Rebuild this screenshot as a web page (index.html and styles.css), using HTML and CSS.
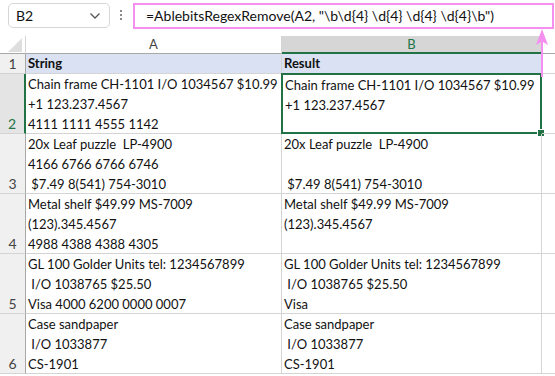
FILE: index.html
```html
<!DOCTYPE html>
<html lang="en">
<head>
    <meta charset="UTF-8">
    <title>AblebitsRegexRemove</title>
    <link rel="stylesheet" href="styles.css">
</head>
<body>
    <div class="bar">
        <div class="namebox">
            <span>B2</span>
            <svg class="chev" width="12" height="8" viewBox="0 0 12 8"><path d="M1.5 1.5 L6 6 L10.5 1.5" fill="none" stroke="#555" stroke-width="1.3"/></svg>
        </div>
        <div class="dots"><i></i><i></i><i></i></div>
        <div class="formula">=AblebitsRegexRemove(A2, "\b\d{4} \d{4} \d{4} \d{4}\b")</div>
    </div>

    <div class="sheet">
        <div class="corner"><span class="tri"></span></div>
        <div class="colhead">A</div>
        <div class="colhead sel">B</div>
        <div class="colhead rest"></div>

        <div class="rowhead">1</div>
        <div class="cell head">String</div>
        <div class="cell head">Result</div>
        <div class="cell rest"></div>

        <div class="rowhead sel">2</div>
        <div class="cell">Chain frame CH-1101 I/O 1034567 $10.99<br>+1 123.237.4567<br>4111 1111 4555 1142</div>
        <div class="cell active">Chain frame CH-1101 I/O 1034567 $10.99<br>+1 123.237.4567<span class="handle"></span></div>
        <div class="cell rest"></div>

        <div class="rowhead">3</div>
        <div class="cell">20x Leaf puzzle&nbsp; LP-4900<br>4166 6766 6766 6746<br>&nbsp;$7.49 8(541) 754-3010</div>
        <div class="cell">20x Leaf puzzle&nbsp; LP-4900<br><br>&nbsp;$7.49 8(541) 754-3010</div>
        <div class="cell rest"></div>

        <div class="rowhead">4</div>
        <div class="cell">Metal shelf $49.99 MS-7009<br>(123).345.4567<br>4988 4388 4388 4305</div>
        <div class="cell">Metal shelf $49.99 MS-7009<br>(123).345.4567</div>
        <div class="cell rest"></div>

        <div class="rowhead">5</div>
        <div class="cell">GL 100 Golder Units tel: 1234567899<br>&nbsp;I/O 1038765 $25.50<br>Visa 4000 6200 0000 0007</div>
        <div class="cell">GL 100 Golder Units tel: 1234567899<br>&nbsp;I/O 1038765 $25.50<br>Visa</div>
        <div class="cell rest"></div>

        <div class="rowhead">6</div>
        <div class="cell">Case sandpaper<br>&nbsp;I/O 1033877<br>CS-1901</div>
        <div class="cell">Case sandpaper<br>&nbsp;I/O 1033877<br>CS-1901</div>
        <div class="cell rest"></div>
    </div>

    <!-- callout arrow from the formula bar down to the active cell -->
    <svg class="arrow" width="14" height="48" viewBox="0 0 14 48">
        <path d="M7 0 L13 16 L8 13 L8 48 L6 48 L6 13 L1 16 Z" fill="#f58ff0"/>
    </svg>
</body>
</html>
```

FILE: styles.css
```css
body {
    margin: 0;
    width: 555px;
    height: 376px;
    overflow: hidden;
    background: #fff;
    font-family: "Lato", "Liberation Sans", sans-serif;
    color: #111;
    position: relative;
}
.bar {
    height: 36px;
    display: flex;
    align-items: flex-start;
    padding-top: 3px;
    box-sizing: border-box;
}
.namebox {
    margin-left: 8px;
    width: 102px;
    height: 25px;
    border: 1px solid #d6d6d6;
    border-radius: 5px;
    box-sizing: border-box;
    display: flex;
    align-items: center;
    justify-content: space-between;
    padding: 0 8px 0 7px;
    font-size: 14px;
}
.dots {
    width: 22px;
    display: flex;
    flex-direction: column;
    align-items: center;
    gap: 2px;
    padding-top: 7px;
}
.dots i {
    width: 2px;
    height: 2px;
    background: #8a8a8a;
}
.formula {
    margin-left: 1px;
    width: 421px;
    height: 26px;
    border: 2px solid #f58ff0;
    box-sizing: border-box;
    padding-left: 11px;
    font-size: 14px;
    line-height: 22px;
    white-space: nowrap;
    overflow: hidden;
}
.sheet {
    display: grid;
    grid-template-columns: 26px 256px 260px 1fr;
    grid-template-rows: 18px 20px repeat(5, 60px);
    font-size: 13px;
}
.corner {
    background: #fff;
    border-right: 1px solid #d4d4d4;
    border-bottom: 1px solid #a8a8a8;
    position: relative;
}
.tri {
    position: absolute;
    right: 3px;
    bottom: 1px;
    width: 0;
    height: 0;
    border-left: 14px solid transparent;
    border-bottom: 14px solid #dedede;
}
.colhead {
    border-right: 1px solid #d4d4d4;
    border-bottom: 1px solid #a8a8a8;
    background: #fff;
    text-align: center;
    font-size: 13px;
    line-height: 17px;
    color: #444;
}
.colhead.sel {
    background: #d6d6d6;
    color: #217346;
    border-bottom: 2px solid #217346;
}
.colhead.rest {
    border-right: none;
}
.rowhead {
    background: #f0f0f0;
    border-right: 1px solid #a8a8a8;
    border-bottom: 1px solid #d4d4d4;
    color: #444;
    font-size: 14px;
    text-align: center;
    display: flex;
    align-items: flex-end;
    justify-content: center;
    padding-bottom: 1px;
    box-sizing: border-box;
}
.rowhead.sel {
    color: #217346;
    border-right: 2px solid #217346;
    background: #e4e4e4;
}
.cell {
    border-right: 1px solid #d4d4d4;
    border-bottom: 1px solid #d4d4d4;
    padding: 0 2px;
    line-height: 20px;
    white-space: nowrap;
    overflow: hidden;
    position: relative;
}
.cell.head {
    background: #d9e1f2;
    font-weight: bold;
    line-height: 19px;
}
.cell.rest {
    border-right: none;
}
.cell.active {
    border: 2px solid #217346;
    margin: -1px 0 0 -1px;
    padding: 0 1px 0 2px;
    overflow: visible;
}
.handle {
    position: absolute;
    right: -5px;
    bottom: -5px;
    width: 6px;
    height: 6px;
    background: #217346;
    border: 1px solid #fff;
}
.arrow {
    position: absolute;
    left: 535px;
    top: 29px;
}
```
